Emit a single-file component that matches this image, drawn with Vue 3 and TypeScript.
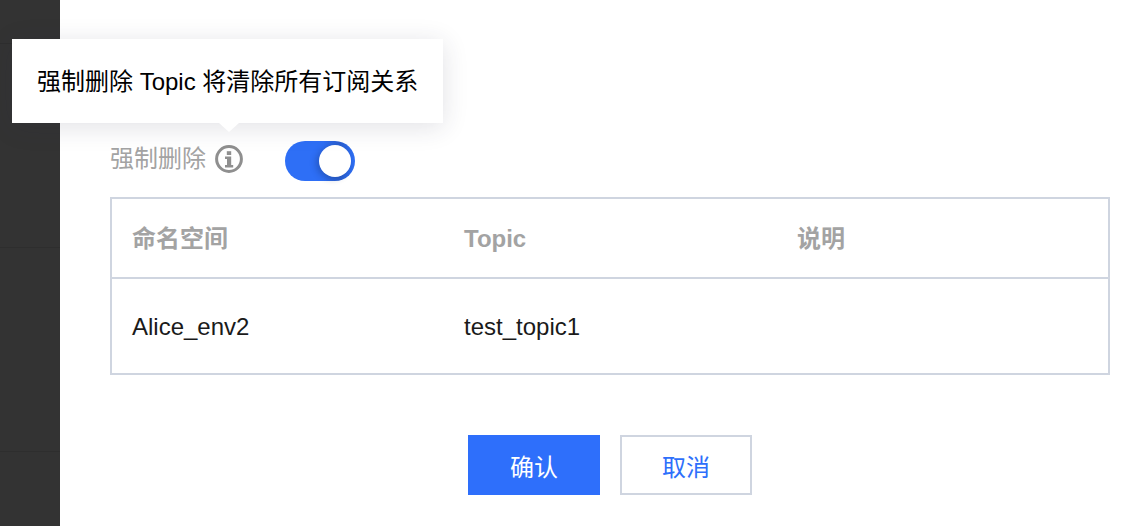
<script setup lang="ts">
const headers: string[] = ['命名空间', 'Topic', '说明']
const row: string[] = ['Alice_env2', 'test_topic1', '']
</script>

<template>
  <div class="page">
    <aside class="side">
      <div class="side-item one"></div>
      <div class="side-item two"></div>
      <div class="side-item three"></div>
    </aside>
    <main class="main">
      <div class="switch-row">
        <span class="label">强制删除</span>
        <svg class="info" viewBox="0 0 28 28" width="28" height="28" aria-hidden="true">
          <circle cx="14" cy="14" r="12.4" fill="none" stroke="#8f8f8f" stroke-width="3" />
          <rect x="11.8" y="6.2" width="4.4" height="3.8" fill="#8f8f8f" />
          <path d="M10 11.6h6.2v8.4h2v2.4h-8.2v-2.4h2v-6h-2z" fill="#8f8f8f" />
        </svg>
        <span class="switch"><span class="knob"></span></span>
      </div>
      <div class="table">
        <div class="tr head">
          <div v-for="h in headers" :key="h" class="td">{{ h }}</div>
        </div>
        <div class="tr body">
          <div v-for="(c, i) in row" :key="i" class="td">{{ c }}</div>
        </div>
      </div>
      <div class="actions">
        <button class="btn primary" type="button">确认</button>
        <button class="btn ghost" type="button">取消</button>
      </div>
    </main>
    <div class="tooltip"><span class="tip-text">强制删除 Topic 将清除所有订阅关系</span></div>
  </div>
</template>

<style>
html, body { margin: 0; background: #fff; }
</style>

<style scoped>
.page {
  position: relative;
  display: flex;
  width: 1143px;
  height: 526px;
  overflow: hidden;
  background: #fff;
  font-family: "Liberation Sans", "Noto Sans CJK SC", sans-serif;
}
.side {
  width: 60px;
  flex: none;
  background: #333;
  display: flex;
  flex-direction: column;
}
.side-item { border-bottom: 1px solid #2e2e2e; }
.one { height: 43px; }
.two { height: 203px; }
.three { height: 203px; }
.main {
  flex: 1;
  padding: 141px 33px 0 50px;
  min-width: 0;
}
.switch-row {
  display: flex;
  align-items: center;
  height: 40px;
}
.label {
  font-size: 24px;
  line-height: 36px;
  color: #a3a3a3;
  width: 95px;
  white-space: nowrap;
  margin-top: -4px;
}
.info {
  margin-left: 10px;
  margin-top: -4px;
  flex: none;
}
.switch {
  position: relative;
  display: block;
  margin-left: 42px;
  width: 70px;
  height: 40px;
  border-radius: 20px;
  background: linear-gradient(90deg, #2e6ff6 55%, #2a5fd0 78%, #2e6ff6 100%);
}
.knob {
  position: absolute;
  top: 4px;
  right: 4px;
  width: 32px;
  height: 32px;
  border-radius: 50%;
  background: #fff;
  box-shadow: -3px 2px 6px rgba(20, 40, 90, 0.3);
}
.table {
  margin-top: 16px;
  width: 1000px;
  box-sizing: border-box;
  border: 2px solid #cfd5e0;
}
.tr {
  display: grid;
  grid-template-columns: 332px 333px 1fr;
  align-items: center;
}
.head {
  height: 78px;
  border-bottom: 2px solid #cfd5e0;
  color: #a3a3a3;
  font-weight: 700;
  font-size: 24px;
}
.body {
  height: 94px;
  color: #1a1a1a;
  font-size: 24px;
}
.td {
  padding: 2px 0 0 20px;
  white-space: nowrap;
  line-height: 36px;
  min-height: 36px;
}
.actions {
  display: flex;
  justify-content: center;
  gap: 20px;
  margin-top: 60px;
  width: 1000px;
}
.btn {
  width: 132px;
  height: 60px;
  box-sizing: border-box;
  font: inherit;
  font-size: 24px;
  padding: 0;
  border-radius: 0;
}
.primary {
  background: #2e6ffb;
  color: #fff;
  border: none;
}
.ghost {
  background: #fff;
  color: #2e6ffb;
  border: 2px solid #cfd5e0;
}
.tooltip {
  position: absolute;
  left: 12px;
  top: 39px;
  width: 431px;
  height: 84px;
  box-sizing: border-box;
  padding-left: 25px;
  display: flex;
  align-items: center;
  background: #fff;
  color: #000;
  font-size: 24px;
  white-space: nowrap;
  box-shadow: 0 4px 24px rgba(40, 45, 70, 0.14);
}
.tip-text {
  margin-top: -4px;
}
.tooltip::after {
  content: "";
  position: absolute;
  left: 207px;
  bottom: -9px;
  border-left: 10px solid transparent;
  border-right: 10px solid transparent;
  border-top: 9px solid #fff;
}
</style>
